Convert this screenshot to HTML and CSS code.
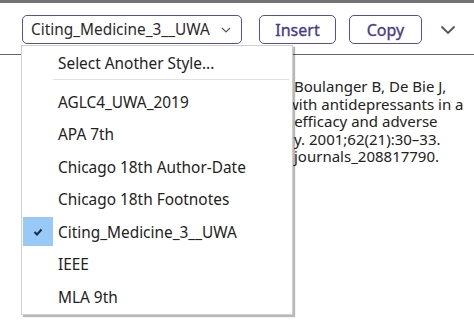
FILE: index.html
```html
<!DOCTYPE html>
<html>
<head>
<meta charset="utf-8">
<link rel="stylesheet" href="styles.css">
</head>
<body>
<div class="topbar"></div>
<div class="toolbar">
  <div class="select">
    <span class="select-text">Citing_Medicine_3__UWA</span>
    <svg class="select-chev" width="12" height="8" viewBox="0 0 12 8"><path d="M2 2 L6 6 L10 2" fill="none" stroke="#555" stroke-width="1.1"/></svg>
  </div>
  <button class="btn btn-insert">Insert</button>
  <button class="btn btn-copy">Copy</button>
  <svg class="more" width="16" height="10" viewBox="0 0 16 10"><path d="M1.5 1.5 L8 8 L14.5 1.5" fill="none" stroke="#555" stroke-width="1.8"/></svg>
</div>
<div class="rule"></div>
<div class="citation">
  <div class="line l1">Boulanger B, De Bie J,</div>
  <div class="line l2">with antidepressants in a</div>
  <div class="line l3">of efficacy and adverse</div>
  <div class="line l4">y. 2001;62(21):30–33.</div>
  <div class="line l5">journals_208817790.</div>
</div>
<div class="menu">
  <div class="item head">Select Another Style...</div>
  <div class="sep"></div>
  <div class="item">AGLC4_UWA_2019</div>
  <div class="item">APA 7th</div>
  <div class="item">Chicago 18th Author-Date</div>
  <div class="item">Chicago 18th Footnotes</div>
  <div class="item checked"><span class="check"><svg width="12" height="10" viewBox="0 0 12 10"><path d="M2.5 5 L5 7.5 L9.5 2.5" fill="none" stroke="#1a2a4a" stroke-width="2"/></svg></span>Citing_Medicine_3__UWA</div>
  <div class="item">IEEE</div>
  <div class="item">MLA 9th</div>
</div>
</body>
</html>
```
FILE: styles.css
```css
html, body {
  margin: 0;
  padding: 0;
  background: #fff;
}
body {
  font-family: "Noto Sans", "Open Sans", sans-serif;
  color: #222;
  width: 474px;
  height: 327px;
  overflow: hidden;
  position: relative;
}
.topbar {
  height: 3px;
  background: #737373;
}
.toolbar {
  display: flex;
  align-items: center;
  padding: 12px 0 0 22px;
  height: 29px;
}
.select {
  box-sizing: border-box;
  width: 220px;
  height: 29px;
  border: 1.5px solid #5d4d9e;
  border-radius: 5px;
  display: flex;
  align-items: center;
  padding: 0 0 0 8px;
}
.select-text {
  font-size: 15.4px;
  color: #2a2a2a;
  flex: 1;
}
.select-chev {
  margin-right: 9px;
}
.btn {
  box-sizing: border-box;
  height: 29px;
  border: 1.5px solid #5d4d9e;
  border-radius: 5px;
  background: #fff;
  color: #4a3b8c;
  font-family: "Noto Sans", "Open Sans", sans-serif;
  font-size: 16px;
  font-weight: 400;
  -webkit-text-stroke: 0.35px #4a3b8c;
  padding: 0;
}
.btn-insert {
  width: 77px;
  margin-left: 17px;
}
.btn-copy {
  width: 73px;
  margin-left: 13px;
}
.more {
  margin-left: 18px;
}
.rule {
  margin-top: 10px;
  height: 1px;
  background: #666;
}
.citation {
  padding-top: 23px;
  font-size: 15px;
  line-height: 17.5px;
  color: #222;
}
.line {
  white-space: nowrap;
}
.l1 { margin-left: 294px; }
.l2 { margin-left: 287px; }
.l3 { margin-left: 276px; }
.l4 { margin-left: 294px; }
.l5 { margin-left: 294px; }
.menu {
  position: absolute;
  left: 21px;
  top: 45px;
  width: 272px;
  height: 270px;
  box-sizing: border-box;
  background: #fff;
  border: 1px solid #cfcfcf;
  box-shadow: 2px 2px 1px rgba(0,0,0,0.28);
  padding-top: 1px;
}
.item {
  height: 32.5px;
  display: flex;
  align-items: center;
  padding-left: 36px;
  font-size: 15.4px;
  color: #222;
  white-space: nowrap;
  position: relative;
}
.item.head {
  height: 32px;
}
.sep {
  height: 1px;
  background: #e2e2e2;
  margin: 0 3px 6px 31px;
}
.check {
  position: absolute;
  left: 1px;
  top: 1px;
  width: 30px;
  height: 29px;
  background: #99c9f7;
  display: flex;
  align-items: center;
  justify-content: center;
}
```
